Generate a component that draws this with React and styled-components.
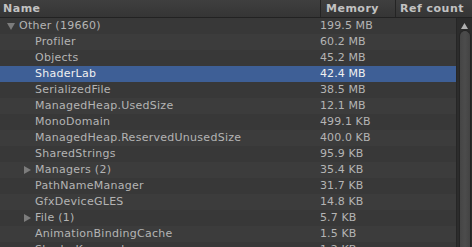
import React from 'react';
import styled, { createGlobalStyle } from 'styled-components';

const GlobalStyle = createGlobalStyle`
  html, body {
    margin: 0;
    padding: 0;
    background: #383838;
    overflow: hidden;
  }
`

const Panel = styled.div`
  width: 472px;
  height: 247px;
  display: flex;
  flex-direction: column;
  background: #383838;
  font-family: "DejaVu Sans", "Liberation Sans", sans-serif;
  overflow: hidden;
`

const HeaderBar = styled.div`
  display: flex;
  height: 17px;
  flex-shrink: 0;
  background: linear-gradient(#3f3f3f, #353535);
  border-bottom: 1px solid #222;
`

const HeaderCell = styled.div`
  width: ${p => p.width}px;
  flex: ${p => (p.grow ? 1 : 'none')};
  box-sizing: border-box;
  padding-left: ${p => p.pad}px;
  border-left: ${p => (p.divider ? '1px solid #242424' : 'none')};
  font-size: 11px;
  font-weight: bold;
  letter-spacing: 0.5px;
  line-height: 17px;
  color: #c2c2c2;
  white-space: nowrap;
  overflow: hidden;
`

const Body = styled.div`
  flex: 1;
  display: flex;
  min-height: 0;
`

const List = styled.div`
  flex: 1;
  display: flex;
  flex-direction: column;
  overflow: hidden;
`

const Row = styled.div`
  display: flex;
  flex-shrink: 0;
  height: 16px;
  background: ${p => (p.selected ? '#3e5f96' : p.odd ? '#3c3c3c' : '#383838')};
  color: ${p => (p.selected ? '#f0f0f0' : '#b4b4b4')};
  font-size: 11px;
  letter-spacing: 0.27px;
  line-height: 16px;
  white-space: nowrap;
`

const NameCell = styled.div`
  width: 320px;
  display: flex;
  align-items: center;
  padding-left: ${p => 7 + p.depth * 16}px;
  box-sizing: border-box;
  overflow: hidden;
`

const Toggle = styled.span`
  width: 12px;
  height: 16px;
  flex-shrink: 0;
  display: flex;
  align-items: center;
`

const MemCell = styled.div`
  width: 75px;
  letter-spacing: 0.1px;
`

const Scrollbar = styled.div`
  width: 16px;
  flex-shrink: 0;
  display: flex;
  flex-direction: column;
  align-items: center;
  background: #2c2c2c;
  border-left: 1px solid #262626;
  box-sizing: border-box;
`

const ArrowUp = styled.div`
  height: 10px;
  display: flex;
  align-items: flex-end;
  justify-content: center;
  padding-top: 1px;
`

const Thumb = styled.div`
  flex: 1;
  width: 12px;
  margin-top: 1px;
  border-radius: 6px 6px 0 0;
  background: linear-gradient(90deg, #454545, #4c4c4c 50%, #434343);
  border: 1px solid #242424;
  border-bottom: none;
  box-sizing: border-box;
`

const rows = [
  { name: 'Other (19660)', mem: '199.5 MB', depth: 0, arrow: 'down' },
  { name: 'Profiler', mem: '60.2 MB', depth: 1 },
  { name: 'Objects', mem: '45.2 MB', depth: 1 },
  { name: 'ShaderLab', mem: '42.4 MB', depth: 1, selected: true },
  { name: 'SerializedFile', mem: '38.5 MB', depth: 1 },
  { name: 'ManagedHeap.UsedSize', mem: '12.1 MB', depth: 1 },
  { name: 'MonoDomain', mem: '499.1 KB', depth: 1 },
  { name: 'ManagedHeap.ReservedUnusedSize', mem: '400.0 KB', depth: 1 },
  { name: 'SharedStrings', mem: '95.9 KB', depth: 1 },
  { name: 'Managers (2)', mem: '35.4 KB', depth: 1, arrow: 'right' },
  { name: 'PathNameManager', mem: '31.7 KB', depth: 1 },
  { name: 'GfxDeviceGLES', mem: '14.8 KB', depth: 1 },
  { name: 'File (1)', mem: '5.7 KB', depth: 1, arrow: 'right' },
  { name: 'AnimationBindingCache', mem: '1.5 KB', depth: 1 },
  { name: 'ShaderKeywords', mem: '1.2 KB', depth: 1 },
]

const Triangle = ({ dir }) => (
  <svg width="8" height="8" viewBox="0 0 8 8">
    {dir === 'down'
      ? <path d="M0 1 L8 1 L4 8 Z" fill="#7c7c7c" />
      : <path d="M1 0 L8 4 L1 8 Z" fill="#7c7c7c" />}
  </svg>
)

export default function App() {
  return (
    <Panel>
      <GlobalStyle />
      <HeaderBar>
        <HeaderCell width={320} pad={3}>Name</HeaderCell>
        <HeaderCell width={75} pad={5} divider>Memory</HeaderCell>
        <HeaderCell grow pad={4} divider>Ref count</HeaderCell>
      </HeaderBar>
      <Body>
        <List>
          {rows.map((r, i) => (
            <Row key={r.name} odd={i % 2 === 1} selected={r.selected}>
              <NameCell depth={r.depth}>
                <Toggle>{r.arrow && <Triangle dir={r.arrow} />}</Toggle>
                {r.name}
              </NameCell>
              <MemCell>{r.mem}</MemCell>
            </Row>
          ))}
        </List>
        <Scrollbar>
          <ArrowUp>
            <svg width="7" height="6" viewBox="0 0 7 6"><path d="M3.5 0 L7 6 L0 6 Z" fill="#b0b0b0" /></svg>
          </ArrowUp>
          <Thumb />
        </Scrollbar>
      </Body>
    </Panel>
  )
}
